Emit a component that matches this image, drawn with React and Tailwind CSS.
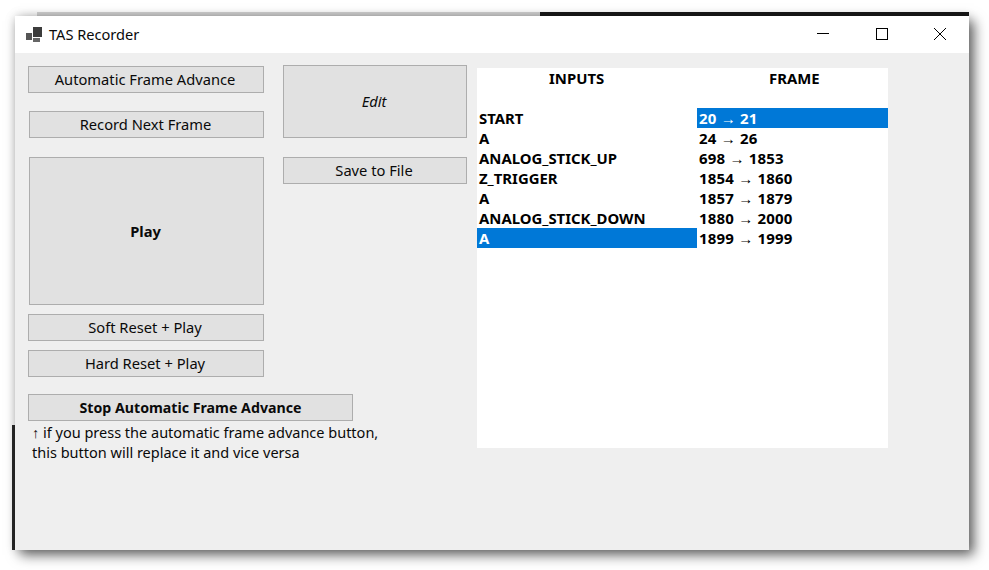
import React from "react";

function Btn({ className = "", children }) {
  return (
    <button className={"flex items-center justify-center bg-[#e1e1e1] border border-[#adadad] text-[#0a0a0a] pr-[2px] " + className}>
      {children}
    </button>
  );
}

const inputs = ["START", "A", "ANALOG_STICK_UP", "Z_TRIGGER", "A", "ANALOG_STICK_DOWN", "A"];
const frames = ["20 → 21", "24 → 26", "698 → 1853", "1854 → 1860", "1857 → 1879", "1880 → 2000", "1899 → 1999"];

export default function App() {
  return (
    <div className="relative w-[989px] h-[570px] overflow-hidden bg-white font-['Noto_Sans','Open_Sans',sans-serif]">
      <div className="absolute left-[37px] top-[12px] w-[503px] h-[4px] bg-[#d4d4d4]" />
      <div className="absolute left-[540px] top-[12px] w-[429px] h-[4px] bg-[#1a1a1a]" />
      <div className="absolute left-[12px] top-[425px] w-[3px] h-[125px] bg-[#2a2a2a]" />
      <div className="relative ml-[15px] mt-[16px] w-[954px] h-[534px] flex flex-col bg-[#efefef] shadow-[5px_5px_12px_0px_rgba(0,0,0,0.6),0_0_10px_rgba(0,0,0,0.15)]">
        <div className="h-[37px] bg-white flex items-center shrink-0">
          <svg className="ml-[11px] w-[16px] h-[16px]" viewBox="0 0 16 16" fill="#3c3c3c">
            <rect x="7" y="0" width="9" height="10" />
            <rect x="0" y="6" width="6" height="7" fill="#555" />
            <rect x="7" y="11" width="7" height="4" fill="#666" />
          </svg>
          <span className="ml-[7px] text-[14.6px] text-[#0a0a0a]">TAS Recorder</span>
          <div className="ml-auto flex items-center h-full">
            <div className="w-[58px] flex justify-center">
              <svg className="-mt-px" width="14" height="14" viewBox="0 0 14 14"><path d="M1 6.5h12" stroke="#000" /></svg>
            </div>
            <div className="w-[59px] flex justify-center">
              <svg className="-mt-px" width="14" height="14" viewBox="0 0 14 14"><rect x="1.5" y="1.5" width="11" height="11" fill="none" stroke="#000" /></svg>
            </div>
            <div className="w-[58px] flex justify-center">
              <svg className="-mt-px" width="14" height="14" viewBox="0 0 14 14"><path d="M1 1l12 12M13 1L1 13" stroke="#000" /></svg>
            </div>
          </div>
        </div>
        <div className="flex-1 grid grid-cols-[236px_184px_411px] gap-x-[19px] pl-[13px] pt-[12px]">
          <div className="flex flex-col items-start pt-px text-[14.7px]">
            <Btn className="w-[236px] h-[27px]">Automatic Frame Advance</Btn>
            <Btn className="w-[235px] h-[27px] ml-px mt-[18px]">Record Next Frame</Btn>
            <Btn className="w-[235px] h-[148px] ml-px mt-[19px] font-bold">Play</Btn>
            <Btn className="w-[236px] h-[27px] mt-[9px]">Soft Reset + Play</Btn>
            <Btn className="w-[236px] h-[27px] mt-[9px]">Hard Reset + Play</Btn>
            <Btn className="w-[325px] h-[27px] mt-[17px] pl-[2px] font-bold text-[14.2px]">Stop Automatic Frame Advance</Btn>
            <p className="ml-[4px] mt-[1px] w-[360px] text-[14.5px] leading-[20px] text-[#0a0a0a]">
              ↑ if you press the automatic frame advance button,<br />this button will replace it and vice versa
            </p>
          </div>
          <div className="flex flex-col text-[14.7px]">
            <Btn className="w-[184px] h-[73px] italic">Edit</Btn>
            <Btn className="w-[184px] h-[27px] mt-[19px]">Save to File</Btn>
          </div>
          <div className="-ml-[9px] mt-[3px] h-[380px] w-[411px] bg-white grid grid-cols-[220px_191px] auto-rows-[20px] content-start text-[14.9px] font-bold leading-[20px] text-black">
            <div className="pl-[72px]">INPUTS</div>
            <div className="pl-[72px]">FRAME</div>
            <div className="col-span-2" />
            {inputs.map((name, i) => (
              <React.Fragment key={i}>
                <div className={"pl-[2px] " + (i === 6 ? "bg-[#0078d7] text-white" : "")}>{name}</div>
                <div className={"pl-[2px] text-[15px] tracking-[0.2px] " + (i === 0 ? "bg-[#0078d7] text-white" : "")}>{frames[i]}</div>
              </React.Fragment>
            ))}
          </div>
        </div>
      </div>
    </div>
  );
}
